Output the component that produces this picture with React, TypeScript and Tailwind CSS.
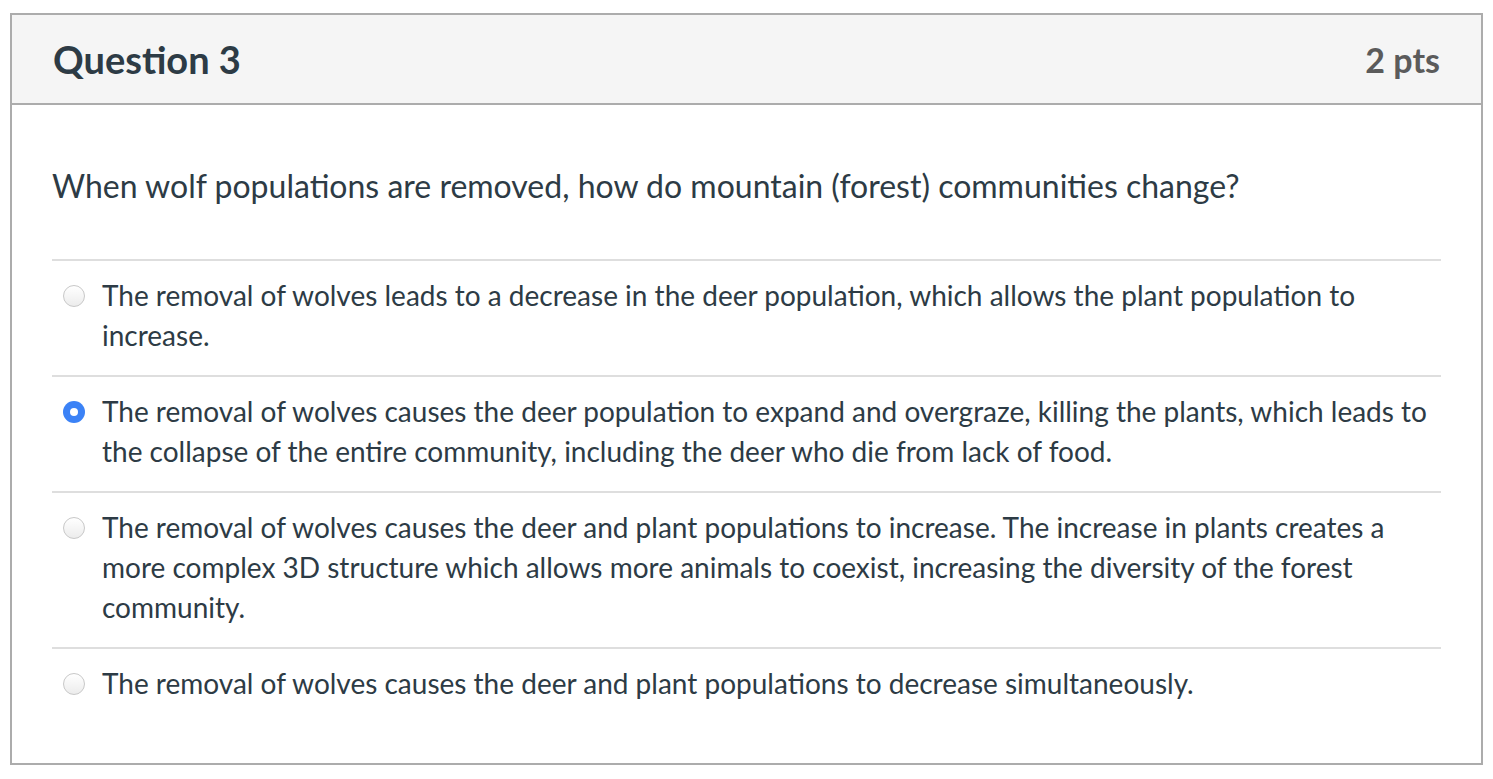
import React from "react";

const answers = [
  {
    text: "The removal of wolves leads to a decrease in the deer population, which allows the plant population to increase.",
    checked: false,
  },
  {
    text: "The removal of wolves causes the deer population to expand and overgraze, killing the plants, which leads to the collapse of the entire community, including the deer who die from lack of food.",
    checked: true,
  },
  {
    text: "The removal of wolves causes the deer and plant populations to increase. The increase in plants creates a more complex 3D structure which allows more animals to coexist, increasing the diversity of the forest community.",
    checked: false,
  },
  {
    text: "The removal of wolves causes the deer and plant populations to decrease simultaneously.",
    checked: false,
  },
];

function Radio({ checked }: { checked: boolean }) {
  if (checked) {
    return (
      <span className="mt-[10px] flex h-[22px] w-[22px] shrink-0 items-center justify-center rounded-full bg-[#3b82f6]">
        <span className="h-[8px] w-[8px] rounded-full bg-white" />
      </span>
    );
  }
  return (
    <span className="mt-[10px] h-[22px] w-[22px] shrink-0 rounded-full border border-[#c8c8c8] bg-gradient-to-b from-[#ffffff] to-[#ececec]" />
  );
}

export default function App() {
  return (
    <div className="min-h-[779px] bg-white pl-[10px] pt-[13px]" style={{ fontFamily: "Lato, 'Open Sans', sans-serif" }}>
      <div className="h-[752px] w-[1473px] border-2 border-[#acacac]">
        <div className="flex h-[90px] items-center justify-between border-b-2 border-[#acacac] bg-[#f5f5f5] pl-[41px] pr-[41px]">
          <span className="text-[38px] font-bold text-[#2d3b45]">Question 3</span>
          <span className="text-[34px] font-bold text-[#5b5b5b]">2 pts</span>
        </div>
        <div className="pl-[40px] pr-[40px]">
          <div className="flex h-[154px] items-center pt-[8px] text-[32px] text-[#2d3b45]">
            When wolf populations are removed, how do mountain (forest) communities change?
          </div>
          {answers.map((a, i) => (
            <div
              key={i}
              className="flex gap-[17px] border-t-2 border-[#dedede] pb-[20px] pl-[11px] pt-[14px]"
            >
              <Radio checked={a.checked} />
              <div className="text-[28px] leading-[40px] text-[#2d3b45]">{a.text}</div>
            </div>
          ))}
        </div>
      </div>
    </div>
  );
}
